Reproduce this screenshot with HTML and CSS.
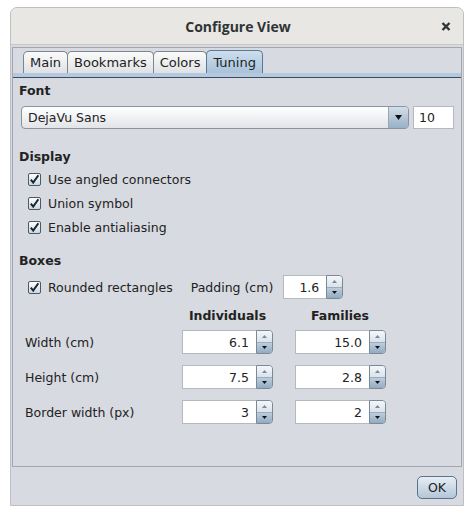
FILE: index.html
```html
<!DOCTYPE html>
<html>
<head>
<meta charset="utf-8">
<link rel="stylesheet" href="styles.css">
</head>
<body>
<div class="window">
  <div class="titlebar">
    <span class="title">Configure View</span>
    <span class="close"><svg width="10" height="9" viewBox="0 0 10 9"><path d="M1.5 1L8.5 8M8.5 1L1.5 8" stroke="#2e3436" stroke-width="2.4" stroke-linecap="butt"/></svg></span>
  </div>
  <div class="tabbox">
    <div class="tabs">
      <div class="tab">Main</div>
      <div class="tab">Bookmarks</div>
      <div class="tab">Colors</div>
      <div class="tab active">Tuning</div>
    </div>
    <div class="content">
      <div class="heading h-font">Font</div>
      <div class="font-row">
        <div class="combo">
          <span class="combo-text">DejaVu Sans</span>
          <span class="combo-btn"><svg width="7" height="5" viewBox="0 0 7 5"><path d="M0 0H7L3.5 5Z" fill="#111"/></svg></span>
        </div>
        <div class="field size-field">10</div>
      </div>

      <div class="heading h-display">Display</div>
      <div class="check-list">
        <label class="check"><span class="box"><svg width="11" height="11" viewBox="0 0 11 11"><path d="M1.8 5.6L4.2 8.6L9.4 1.2" fill="none" stroke="#1c2530" stroke-width="2"/></svg></span>Use angled connectors</label>
        <label class="check"><span class="box"><svg width="11" height="11" viewBox="0 0 11 11"><path d="M1.8 5.6L4.2 8.6L9.4 1.2" fill="none" stroke="#1c2530" stroke-width="2"/></svg></span>Union symbol</label>
        <label class="check"><span class="box"><svg width="11" height="11" viewBox="0 0 11 11"><path d="M1.8 5.6L4.2 8.6L9.4 1.2" fill="none" stroke="#1c2530" stroke-width="2"/></svg></span>Enable antialiasing</label>
      </div>

      <div class="heading h-boxes">Boxes</div>
      <div class="rounded-row">
        <label class="check"><span class="box"><svg width="11" height="11" viewBox="0 0 11 11"><path d="M1.8 5.6L4.2 8.6L9.4 1.2" fill="none" stroke="#1c2530" stroke-width="2"/></svg></span>Rounded rectangles</label>
        <span class="pad-label">Padding (cm)</span>
        <div class="spinner sp-pad">
          <div class="sp-field">1.6</div>
          <div class="sp-btns">
            <span class="sp-up"><svg width="5" height="3" viewBox="0 0 5 3"><path d="M0 3H5L2.5 0Z" fill="#7d8894"/></svg></span>
            <span class="sp-down"><svg width="5" height="3" viewBox="0 0 5 3"><path d="M0 0H5L2.5 3Z" fill="#111"/></svg></span>
          </div>
        </div>
      </div>

      <div class="grid">
        <div></div>
        <div class="col-head">Individuals</div>
        <div class="col-head">Families</div>

        <div class="row-label">Width (cm)</div>
        <div class="spinner"><div class="sp-field">6.1</div><div class="sp-btns"><span class="sp-up"><svg width="5" height="3" viewBox="0 0 5 3"><path d="M0 3H5L2.5 0Z" fill="#7d8894"/></svg></span><span class="sp-down"><svg width="5" height="3" viewBox="0 0 5 3"><path d="M0 0H5L2.5 3Z" fill="#111"/></svg></span></div></div>
        <div class="spinner"><div class="sp-field">15.0</div><div class="sp-btns"><span class="sp-up"><svg width="5" height="3" viewBox="0 0 5 3"><path d="M0 3H5L2.5 0Z" fill="#7d8894"/></svg></span><span class="sp-down"><svg width="5" height="3" viewBox="0 0 5 3"><path d="M0 0H5L2.5 3Z" fill="#111"/></svg></span></div></div>

        <div class="row-label">Height (cm)</div>
        <div class="spinner"><div class="sp-field">7.5</div><div class="sp-btns"><span class="sp-up"><svg width="5" height="3" viewBox="0 0 5 3"><path d="M0 3H5L2.5 0Z" fill="#7d8894"/></svg></span><span class="sp-down"><svg width="5" height="3" viewBox="0 0 5 3"><path d="M0 0H5L2.5 3Z" fill="#111"/></svg></span></div></div>
        <div class="spinner"><div class="sp-field">2.8</div><div class="sp-btns"><span class="sp-up"><svg width="5" height="3" viewBox="0 0 5 3"><path d="M0 3H5L2.5 0Z" fill="#7d8894"/></svg></span><span class="sp-down"><svg width="5" height="3" viewBox="0 0 5 3"><path d="M0 0H5L2.5 3Z" fill="#111"/></svg></span></div></div>

        <div class="row-label">Border width (px)</div>
        <div class="spinner"><div class="sp-field">3</div><div class="sp-btns"><span class="sp-up"><svg width="5" height="3" viewBox="0 0 5 3"><path d="M0 3H5L2.5 0Z" fill="#7d8894"/></svg></span><span class="sp-down"><svg width="5" height="3" viewBox="0 0 5 3"><path d="M0 0H5L2.5 3Z" fill="#111"/></svg></span></div></div>
        <div class="spinner"><div class="sp-field">2</div><div class="sp-btns"><span class="sp-up"><svg width="5" height="3" viewBox="0 0 5 3"><path d="M0 3H5L2.5 0Z" fill="#7d8894"/></svg></span><span class="sp-down"><svg width="5" height="3" viewBox="0 0 5 3"><path d="M0 0H5L2.5 3Z" fill="#111"/></svg></span></div></div>
      </div>
    </div>
  </div>
  <div class="footer">
    <button class="ok">OK</button>
  </div>
</div>
</body>
</html>
```

FILE: styles.css
```css
* { box-sizing: border-box; }
html, body { margin: 0; padding: 0; background: #ffffff; }
body {
  font-family: "DejaVu Sans", sans-serif;
  font-size: 12.5px;
  color: #222;
}
.window {
  margin: 7px 0 0 10px;
  width: 454px;
  height: 499px;
  background: #d7dae0;
  border: 1px solid #bdbfc2;
  border-radius: 7px 7px 0 0;
  display: flex;
  flex-direction: column;
  overflow: hidden;
}
.titlebar {
  height: 37px;
  flex: none;
  background: #e9e7e3;
  border-bottom: 1px solid #c9c8c4;
  display: flex;
  align-items: center;
  justify-content: center;
  position: relative;
}
.title {
  font-family: "Open Sans", sans-serif;
  font-weight: bold;
  font-size: 14px;
  color: #2e3436;
  margin-left: 2px;
}
.close {
  position: absolute;
  right: 12px;
  top: 14px;
  width: 10px;
  height: 9px;
  display: flex;
}
.tabbox {
  margin: 2px 1px 0 1px;
  height: 420px;
  flex: none;
  border: 1px solid #a3a7ad;
  display: flex;
  flex-direction: column;
}
.tabs {
  display: flex;
  padding: 3px 0 0 10px;
  height: 29px;
  border-bottom: 4px solid #b4c9dd;
  box-shadow: 0 1px 0 #3e4b5e;
  position: relative;
}
.tab {
  height: 22px;
  padding: 0 6px;
  border: 1px solid #7f858d;
  border-bottom: none;
  border-radius: 5px 5px 0 0;
  background: linear-gradient(#fbfbfb, #dfe1e4);
  display: flex;
  align-items: center;
  margin-right: -1px;
  color: #222;
  font-size: 13px;
}
.tab.active {
  background: linear-gradient(#cddeee, #a8c2da);
  border-color: #5b7896;
  height: 23px;
  margin-top: -1px;
}
.content {
  padding: 2px 0 0 6px;
  position: relative;
  flex: 1;
}
.heading {
  font-weight: bold;
  font-size: 12.5px;
  height: 16px;
  line-height: 16px;
}
.h-font { margin-top: 4px; }
.font-row {
  display: flex;
  margin-top: 7px;
  margin-left: 2px;
  gap: 4px;
}
.combo {
  width: 388px;
  height: 23px;
  border: 1px solid #8c939b;
  border-radius: 4px;
  background: linear-gradient(#ffffff, #e1e4e8);
  display: flex;
  align-items: center;
  overflow: hidden;
}
.combo-text {
  flex: 1;
  padding-left: 6px;
  font-size: 12.5px;
}
.combo-btn {
  width: 20px;
  height: 100%;
  background: linear-gradient(#d3dfea, #98afc6);
  border-left: 1px solid #9aa6b3;
  display: flex;
  align-items: center;
  justify-content: center;
}
.field {
  background: #fff;
  border: 1px solid #b5b9bf;
  height: 23px;
  display: flex;
  align-items: center;
  padding-left: 5px;
  font-size: 12.5px;
}
.size-field { width: 41px; }
.h-display { margin-top: 20px; }
.check-list {
  margin-top: 6px;
  display: flex;
  flex-direction: column;
  gap: 8px;
}
.check {
  display: flex;
  align-items: center;
  height: 16px;
  padding-left: 9px;
  font-size: 12.5px;
}
.box {
  width: 13px;
  height: 13px;
  border: 1px solid #4d5661;
  border-radius: 2px;
  background: linear-gradient(#ffffff, #c9d8e6);
  display: flex;
  align-items: center;
  justify-content: center;
  margin-right: 7px;
}
.h-boxes { margin-top: 18px; }
.rounded-row {
  display: flex;
  align-items: center;
  margin-top: 6px;
  height: 24px;
}
.pad-label { margin-left: 18px; font-size: 12.5px; }
.spinner {
  display: flex;
  width: 91px;
  height: 24px;
}
.sp-pad { width: 60px; margin-left: 10px; }
.sp-field {
  flex: 1;
  background: #fff;
  border: 1px solid #b5b9bf;
  border-right: none;
  display: flex;
  align-items: center;
  justify-content: flex-end;
  padding-right: 7px;
  font-size: 12.5px;
}
.sp-btns {
  width: 17px;
  display: flex;
  flex-direction: column;
  border: 1px solid #7d8895;
  border-radius: 0 4px 4px 0;
  overflow: hidden;
}
.sp-up, .sp-down {
  flex: 1;
  display: flex;
  align-items: center;
  justify-content: center;
}
.sp-up { background: linear-gradient(#f4f7fa, #d9e3ec); border-bottom: 1px solid #9fadbb; }
.sp-down { background: linear-gradient(#bccddd, #93abc2); }
.grid {
  display: grid;
  grid-template-columns: 141px 91px 90px;
  column-gap: 22px;
  row-gap: 11px;
  margin-top: 9px;
  align-items: center;
}
.col-head {
  font-weight: bold;
  font-size: 12.5px;
  text-align: center;
  height: 16px;
  line-height: 16px;
  margin-bottom: -5px;
}
.row-label {
  padding-left: 6px;
  font-size: 12.5px;
}
.footer {
  flex: 1;
  display: flex;
  justify-content: flex-end;
  align-items: flex-start;
  padding: 9px 6px 0 0;
}
.ok {
  width: 40px;
  height: 23px;
  border: 1px solid #5f7287;
  border-radius: 5px;
  background: linear-gradient(#e6eef5, #b3c6d8);
  font-family: "DejaVu Sans", sans-serif;
  font-size: 12.5px;
  color: #222;
  padding: 0;
}
```
